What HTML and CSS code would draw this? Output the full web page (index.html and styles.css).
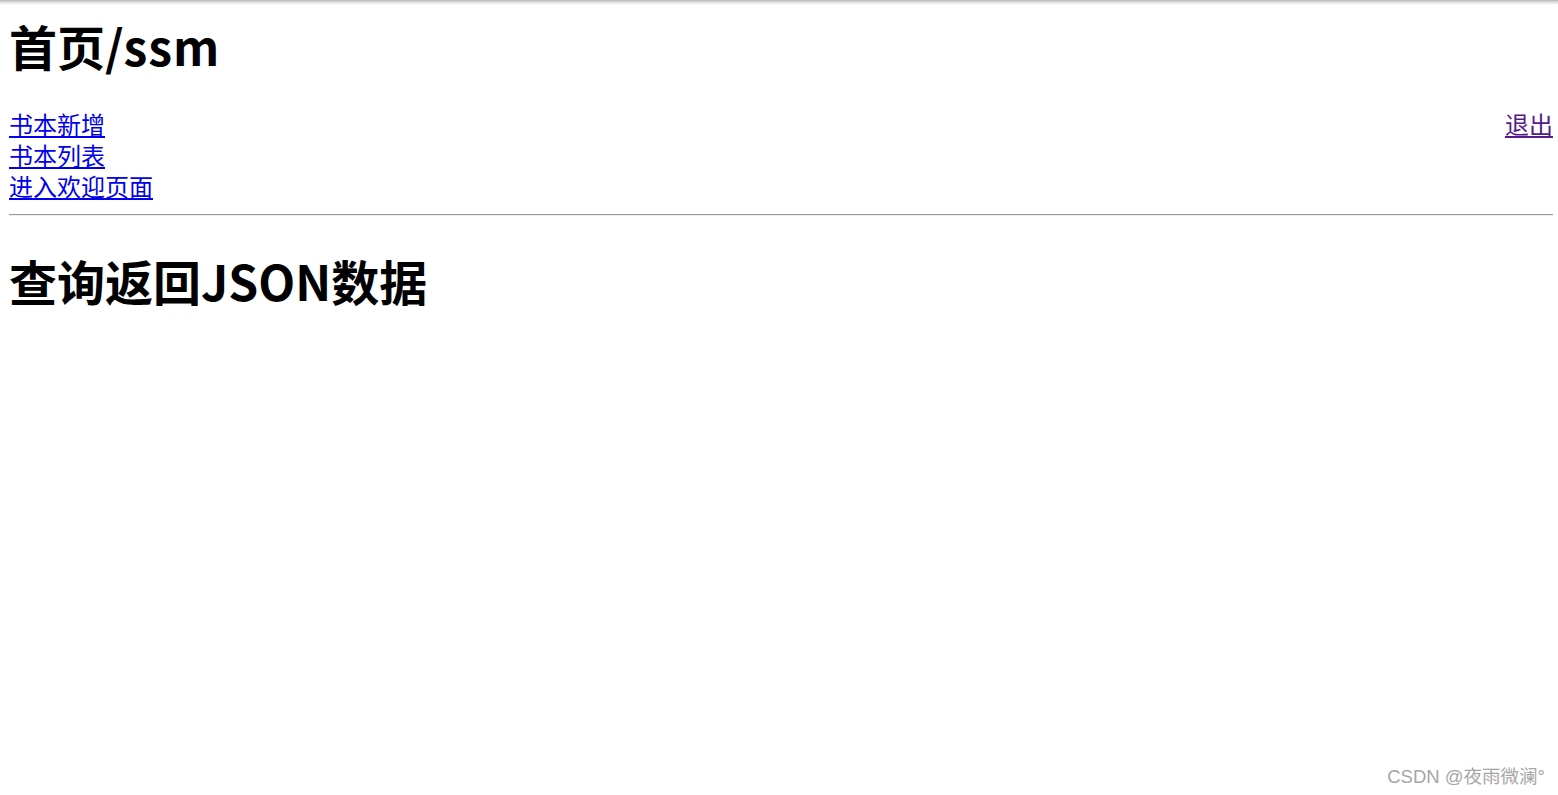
FILE: index.html
```html
<!DOCTYPE html>
<html lang="zh-CN">
<head>
<meta charset="utf-8">
<title>首页/ssm</title>
<link rel="stylesheet" href="styles.css">
</head>
<body>
<div class="topshade"></div>
<main class="page">
  <h1 class="title">首页/<span class="latin">ssm</span></h1>
  <div class="navrow">
    <nav class="links">
      <a href="#add">书本新增</a>
      <a href="#list">书本列表</a>
      <a href="#welcome">进入欢迎页面</a>
    </nav>
    <a class="logout" href="#logout">退出</a>
  </div>
  <hr class="rule">
  <h1 class="title second">查询返回JSON数据</h1>
</main>
<div class="watermark">CSDN @夜雨微澜°</div>
</body>
</html>
```

FILE: styles.css
```css
html, body {
  margin: 0;
  padding: 0;
  background: #fff;
}
body {
  font-family: "Noto Sans CJK SC", "Noto Sans", sans-serif;
  color: #000;
  height: 795px;
  overflow: hidden;
  position: relative;
}
.topshade {
  height: 5px;
  background: linear-gradient(#b4b4b4, #dcdcdc 40%, #fff);
}
.page {
  padding: 8px 5px 0 9px;
}
.title {
  margin: 0;
  font-size: 48px;
  line-height: 64px;
  font-weight: 700;
}
.latin {
  letter-spacing: 1px;
}
.navrow {
  margin-top: 31px;
  display: flex;
  justify-content: space-between;
  align-items: flex-start;
  font-size: 24px;
  line-height: 31px;
}
.links {
  display: flex;
  flex-direction: column;
  align-items: flex-start;
}
.links a {
  display: block;
  height: 31px;
  color: #0000ee;
}
.logout {
  color: #551a8b;
}
.rule {
  margin: 13px 0 0 0;
  border: 0;
  height: 0;
  border-top: 1px solid #9a9a9a;
  border-bottom: 1px solid #eeeeee;
}
.second {
  margin-top: 32px;
}
.watermark {
  position: absolute;
  right: 13px;
  bottom: 7px;
  font-family: "Liberation Sans", "Noto Sans CJK SC", sans-serif;
  font-size: 18.5px;
  line-height: 22px;
  color: #a6a6a6;
}
```
